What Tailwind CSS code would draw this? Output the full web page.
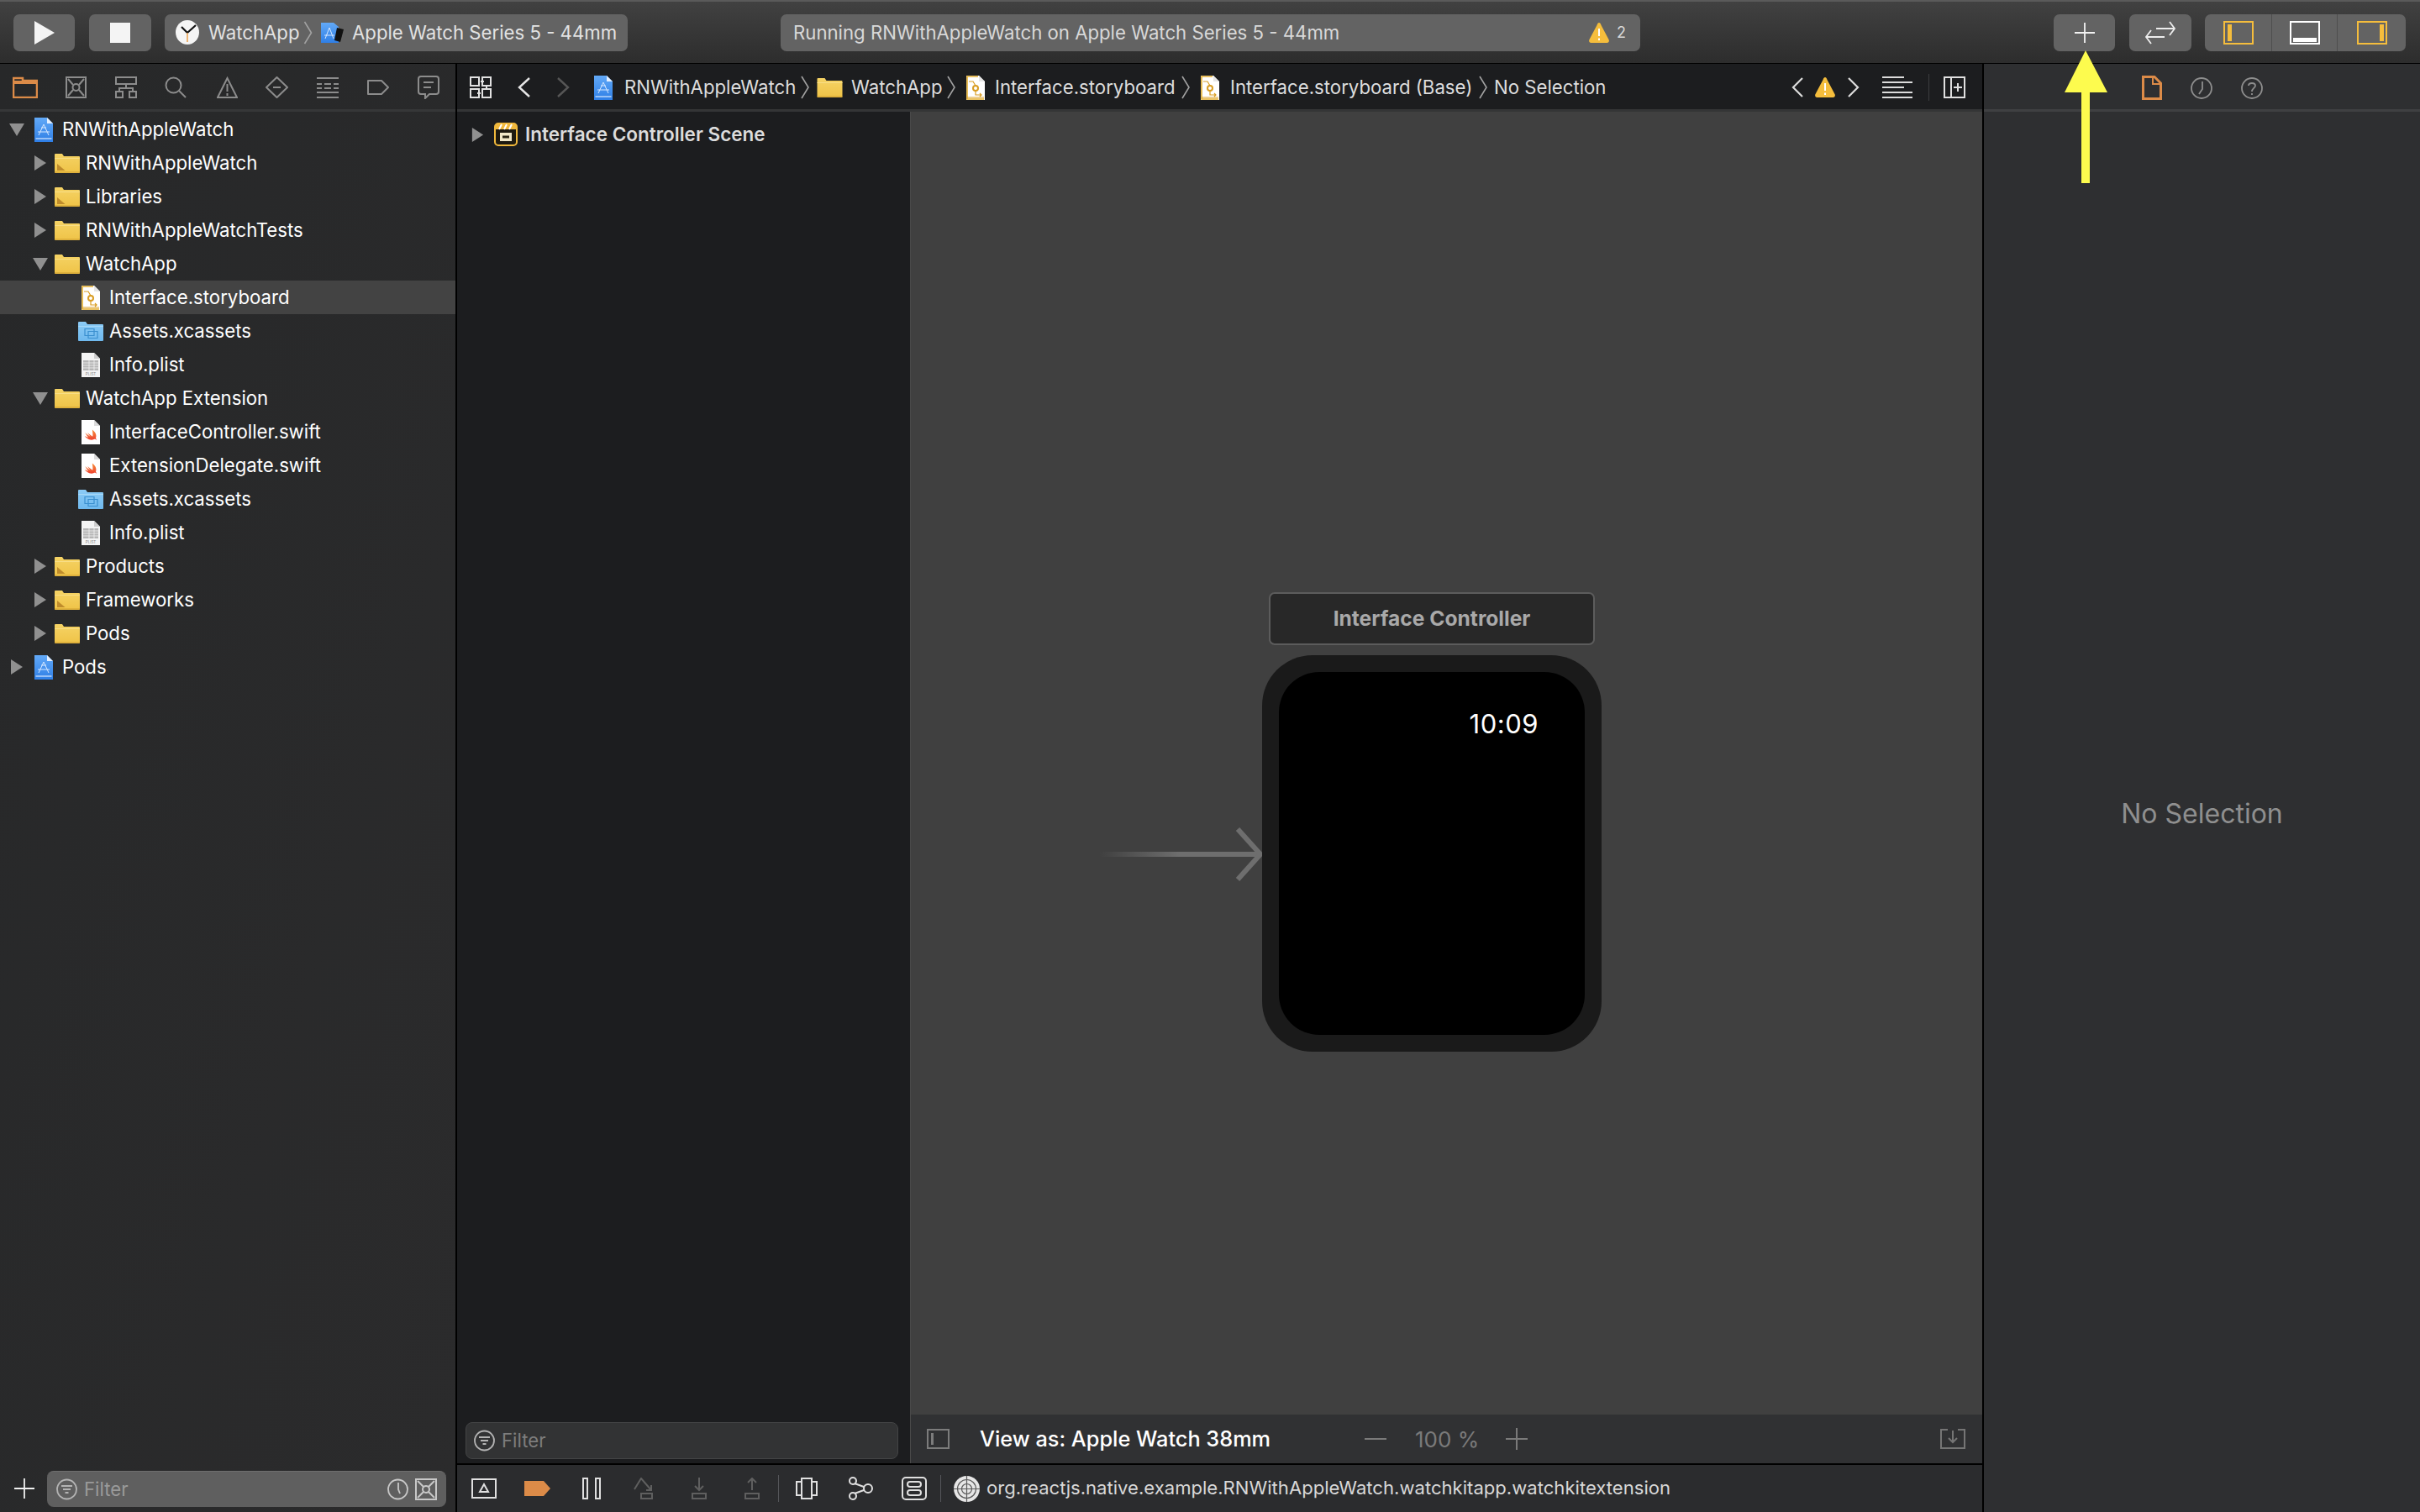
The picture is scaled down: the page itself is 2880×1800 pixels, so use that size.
<!DOCTYPE html>
<html lang="en">
<head>
  <meta charset="UTF-8">
  <title>Xcode - RNWithAppleWatch</title>
  <script src="https://cdn.jsdelivr.net/npm/@tailwindcss/browser@4"></script>
</head>
<body class="relative w-[2880px] h-[1800px] overflow-hidden flex flex-col bg-[#292a2b] font-['Inter',sans-serif] text-[22.2px] text-white">

  <!-- shared icons -->
  <svg class="absolute w-0 h-0">
    <defs>
      <linearGradient id="gBlue" x1="0" y1="0" x2="0" y2="1"><stop offset="0" stop-color="#62a9f7"/><stop offset="1" stop-color="#2f7fe6"/></linearGradient>
      <linearGradient id="gYel" x1="0" y1="0" x2="0" y2="1"><stop offset="0" stop-color="#f5d365"/><stop offset="1" stop-color="#efc347"/></linearGradient>
      <linearGradient id="gSky" x1="0" y1="0" x2="0" y2="1"><stop offset="0" stop-color="#8ccbf6"/><stop offset="1" stop-color="#6fb9ee"/></linearGradient>
      <linearGradient id="gSwift" x1="0" y1="0" x2="0" y2="1"><stop offset="0" stop-color="#f7913c"/><stop offset="1" stop-color="#ee3f2e"/></linearGradient>
      <linearGradient id="gTail" x1="0" y1="0" x2="1" y2="0"><stop offset="0" stop-color="#6e6e6e" stop-opacity="0"/><stop offset="0.5" stop-color="#6e6e6e"/><stop offset="1" stop-color="#6e6e6e"/></linearGradient>
    </defs>
    <symbol id="proj" viewBox="0 0 22 29">
      <path d="M0 0H15L22 7V29H0Z" fill="url(#gBlue)"/><path d="M15 0L22 7H15Z" fill="#e4efff"/>
      <path d="M11 8L5 21M11 8L17 21M4 17H18M8 12H14" stroke="#d5e7ff" stroke-width="1" fill="none"/>
      <path d="M1.5 25H20.5" stroke="#dcebff" stroke-width="1.2"/>
    </symbol>
    <symbol id="folder" viewBox="0 0 30 24">
      <path d="M0 2a1 1 0 0 1 1-1h8l2 3h18a1 1 0 0 1 1 1v18a1 1 0 0 1-1 1H1a1 1 0 0 1-1-1z" fill="url(#gYel)"/>
      <path d="M0 6.5H30" stroke="#f8de86" stroke-width="1"/>
      <path d="M0 23H30" stroke="#cf9f30" stroke-width="1"/>
    </symbol>
    <symbol id="group" viewBox="0 0 30 24">
      <use href="#folder"/>
      <path d="M3 21V13L12.5 21Z" fill="#bf8c2c"/>
    </symbol>
    <symbol id="assets" viewBox="0 0 30 24">
      <path d="M0 2a1 1 0 0 1 1-1h8l2 3h18a1 1 0 0 1 1 1v18a1 1 0 0 1-1 1H1a1 1 0 0 1-1-1z" fill="url(#gSky)"/>
      <path d="M0 6.5H30" stroke="#a6d8f8" stroke-width="1"/>
      <path d="M8 10.500h11v8H8zM12 13.500h11v8H12z" transform="translate(0 -1)" stroke="#3a8fcf" stroke-width="1.2" fill="none"/>
    </symbol>
    <symbol id="story" viewBox="0 0 22 29">
      <path d="M0 0H15L22 7V29H0Z" fill="#fff"/>
      <path d="M15 0L22 7H15Z" fill="#e6e6e6"/>
      <path d="M14 1H1V28H21" stroke="#e2ad2e" stroke-width="1.600" fill="none"/>
      <circle cx="11" cy="15" r="3" fill="none" stroke="#d99d22" stroke-width="2"/>
      <path d="M3 7H8L11 12M11 18V23H18M16 21L18 23L16 25M1 26H21" stroke="#d99d22" stroke-width="1.200" fill="none"/>
    </symbol>
    <symbol id="swift" viewBox="0 0 22 29">
      <path d="M0 0H15L22 7V29H0Z" fill="#fff"/><path d="M15 0L22 7H15Z" fill="#dcdcdc"/>
      <path transform="translate(3 9.500) scale(.68)" d="M14.500 3c3.500 2.500 6 6 6.500 9 .5 2.500 0 4.500-.5 5.500 1 1.500 1.500 3 1.200 4-.8-1.500-3-2.300-4.500-1.600-2 .9-5 1.300-8 .3-3-1-6-3.300-8-6.200 2 1.300 4.500 2.300 6.500 2.400C5 13.500 3 10.500 2 8c3 3 6.500 5.500 9 7C9 12.500 7 10 6 8c3 2.500 6 5 9 7 .8-3-.2-8-.5-12z" fill="url(#gSwift)"/>
    </symbol>
    <symbol id="plist" viewBox="0 0 22 29">
      <path d="M0 0H15L22 7V29H0Z" fill="#f4f4f4"/><path d="M15 0L22 7H15Z" fill="#cfcfcf"/>
      <rect x="2" y="9" width="18" height="12" fill="#b5b5b5"/>
      <path d="M2 12H20M2 15H20M2 18H20M9 9V21M15 9V21" stroke="#f4f4f4" stroke-width=".8"/>
    </symbol>
    <symbol id="right" viewBox="0 0 14 18"><path d="M0 0L14 9L0 18Z" fill="#909090"/></symbol>
    <symbol id="down" viewBox="0 0 18 15"><path d="M0 0H18L9 15Z" fill="#909090"/></symbol>
    <symbol id="sep" viewBox="0 0 10 28"><path d="M1 1L9 14L1 27" fill="none" stroke="#a2a2a2" stroke-width="1.600"/></symbol>
    <symbol id="warn" viewBox="0 0 24 24">
      <path d="M12 0C13 0 14 1 14.500 3L23.500 20C24.500 22 23.500 24 21.500 24H2.500C.5 24 -.5 22 .5 20L9.500 3C10 1 11 0 12 0Z" fill="#f5bd3c"/>
      <path d="M12 7V16M12 18.500V21" stroke="#fff" stroke-width="2"/>
    </symbol>
    <symbol id="filter" viewBox="0 0 25 26">
      <circle cx="12.500" cy="13" r="11.500" fill="none" stroke="#b4b4b4" stroke-width="1.800"/>
      <path d="M6 9H19M8 13H17M10.500 17H14.500" stroke="#b4b4b4" stroke-width="2"/>
    </symbol>
  </svg>

  <!-- toolbar -->
  <header class="h-[76px] shrink-0 flex items-center border-b border-black border-t-2 border-t-[#5a5a5a] bg-linear-to-b from-[#414141] to-[#2d2d2d]">
    <button class="ml-[16px] w-[73px] h-[44px] rounded-[7px] bg-[#636363] flex items-center justify-center">
      <svg class="w-[24px] h-[28px]" viewBox="0 0 24 28"><path d="M0 0L24 14L0 28Z" fill="#f4f4f4"/></svg>
    </button>
    <button class="ml-[17px] w-[74px] h-[44px] rounded-[7px] bg-[#636363] flex items-center justify-center">
      <span class="w-[24px] h-[24px] bg-[#f4f4f4]"></span>
    </button>
    <div class="ml-[16px] w-[551px] h-[44px] rounded-[7px] bg-[#636363] flex items-center whitespace-nowrap text-[#e2e2e2]">
      <svg class="ml-[13px] w-[28px] h-[29px] shrink-0" viewBox="0 0 28 29">
        <ellipse cx="14" cy="14.500" rx="14" ry="14.500" fill="#f5f5f5"/>
        <path d="M14 15L7 8M14 15L24 6" stroke="#111" stroke-width="2.200" fill="none"/>
        <path d="M14 15V26" stroke="#e8902c" stroke-width="1.300"/>
      </svg>
      <span class="ml-[11px] w-[107px]">WatchApp</span>
      <svg class="ml-[6px] w-[11px] h-[28px] shrink-0"><use href="#sep"/></svg>
      <svg class="ml-[8px] w-[30px] h-[26px] shrink-0" viewBox="0 0 30 26">
        <path d="M2 1H17L23 6V25H2Z" fill="url(#gBlue)"/>
        <path d="M12 7L7 20M12 7L17 20M6 16H18" stroke="#d5e7ff" stroke-width="1" fill="none"/>
        <path d="M21 7L29 9L25 24L18 22Z" fill="#111"/>
      </svg>
      <span class="ml-[9px]">Apple Watch Series 5 - 44mm</span>
    </div>
    <div class="ml-[182px] w-[1023px] h-[44px] rounded-[7px] bg-[#636363] flex items-center text-[#d8d8d8] whitespace-nowrap">
      <span class="ml-[15px]">Running RNWithAppleWatch on Apple Watch Series 5 - 44mm</span>
      <svg class="ml-auto w-[24px] h-[24px] shrink-0"><use href="#warn"/></svg>
      <span class="ml-[9px] mr-[17px] text-[18px]">2</span>
    </div>
    <button class="ml-[492px] w-[73px] h-[44px] rounded-[7px] bg-[#636363] flex items-center justify-center">
      <svg class="w-[24px] h-[24px]" viewBox="0 0 24 24"><path d="M12 0V24M0 12H24" stroke="#f2f2f2" stroke-width="1.800"/></svg>
    </button>
    <button class="ml-[17px] w-[74px] h-[44px] rounded-[7px] bg-[#636363] flex items-center justify-center">
      <svg class="w-[38px] h-[28px]" viewBox="0 0 38 28"><path d="M14 9H36M30 1L36 9L30 17M24 19H2M8 11L2 19L8 27" stroke="#ededed" stroke-width="1.800" fill="none"/></svg>
    </button>
    <div class="ml-[16px] w-[239px] h-[44px] rounded-[7px] bg-[#636363] flex items-stretch divide-x divide-[#4e4e4e]">
      <div class="w-[80px] flex items-center justify-center">
        <svg class="w-[36px] h-[28px]" viewBox="0 0 36 28"><rect x="1" y="1" width="34" height="26" fill="none" stroke="#f5bd3c" stroke-width="2"/><rect x="5" y="4" width="5" height="20" fill="#f5bd3c"/></svg>
      </div>
      <div class="w-[78px] flex items-center justify-center">
        <svg class="w-[36px] h-[28px]" viewBox="0 0 36 28"><rect x="1" y="1" width="34" height="26" fill="none" stroke="#fff" stroke-width="2"/><rect x="4" y="20" width="28" height="5" fill="#fff"/></svg>
      </div>
      <div class="flex-1 flex items-center justify-center">
        <svg class="w-[36px] h-[28px]" viewBox="0 0 36 28"><rect x="1" y="1" width="34" height="26" fill="none" stroke="#f5bd3c" stroke-width="2"/><rect x="27" y="4" width="5" height="20" fill="#f5bd3c"/></svg>
      </div>
    </div>
  </header>

  <div class="flex-1 flex min-h-0">

    <!-- navigator -->
    <aside class="w-[544px] shrink-0 flex flex-col border-r-2 border-black bg-linear-to-br from-[#272829] to-[#2b2b2c]">
      <div class="h-[57px] shrink-0 flex items-center pt-[2px] border-b-[3px] border-[#363738]">
        <svg class="ml-[15px] w-[30px] h-[26px]" viewBox="0 0 30 26"><path d="M1 25V2H12V5H29V25Z" fill="none" stroke="#dc8b48" stroke-width="2.500"/><path d="M1 5H29V9H1Z" fill="#dc8b48"/></svg>
        <svg class="ml-[33px] w-[25px] h-[26px]" viewBox="0 0 25 26" fill="none" stroke="#8c8c8c" stroke-width="2"><rect x="1" y="1" width="23" height="24"/><circle cx="12.500" cy="13" r="4"/><path d="M3 3L9 10M22 3L16 10M3 23L9 16M22 23L16 16"/></svg>
        <svg class="ml-[34px] w-[26px] h-[26px]" viewBox="0 0 26 26" fill="none" stroke="#8c8c8c" stroke-width="2"><rect x="1" y="1" width="24" height="8"/><rect x="1" y="18" width="8" height="7"/><rect x="17" y="18" width="8" height="7"/><path d="M13 9V14M5 18V14H21V18"/></svg>
        <svg class="ml-[33px] w-[26px] h-[26px]" viewBox="0 0 26 26" fill="none" stroke="#8c8c8c" stroke-width="2"><circle cx="10.500" cy="10.500" r="9"/><path d="M17 17L25 25"/></svg>
        <svg class="ml-[36px] w-[25px] h-[26px]" viewBox="0 0 25 26" fill="none" stroke="#8c8c8c" stroke-width="2"><path d="M12.500 2L24 25H1Z"/><path d="M12.500 9V18M12.500 20V23"/></svg>
        <svg class="ml-[33px] w-[27px] h-[26px]" viewBox="0 0 27 26" fill="none" stroke="#8c8c8c" stroke-width="2"><path d="M13.500 1L26 13L13.500 25L1 13Z" stroke-linejoin="round"/><path d="M9 13H18"/></svg>
        <svg class="ml-[34px] w-[26px] h-[26px]" viewBox="0 0 26 26" fill="none" stroke="#8c8c8c" stroke-width="2"><path d="M0 2H26M0 9H6M9 9H17M20 9H26M0 14H6M9 14H17M20 14H26M0 19H26M0 25H26"/></svg>
        <svg class="ml-[34px] w-[26px] h-[18px]" viewBox="0 0 26 18" fill="none" stroke="#8c8c8c" stroke-width="2"><path d="M1 1H17L25 9L17 17H1Z" stroke-linejoin="round"/></svg>
        <svg class="ml-[34px] w-[26px] h-[28px]" viewBox="0 0 26 28" fill="none" stroke="#8c8c8c" stroke-width="2"><path d="M4 1H22Q25 1 25 4V19Q25 22 22 22H14L9 27V22H4Q1 22 1 19V4Q1 1 4 1Z"/><path d="M7 8H19M7 14H16"/></svg>
      </div>

      <ul class="flex-1 pt-[1px] whitespace-nowrap">
        <li class="h-[40px] flex items-center pl-[11px]"><svg class="w-[18px] h-[15px]"><use href="#down"/></svg><svg class="ml-[12px] w-[22px] h-[29px]"><use href="#proj"/></svg><span class="ml-[11px]">RNWithAppleWatch</span></li>
        <li class="h-[40px] flex items-center pl-[41px]"><svg class="w-[14px] h-[18px]"><use href="#right"/></svg><svg class="ml-[10px] w-[30px] h-[24px]"><use href="#group"/></svg><span class="ml-[7px]">RNWithAppleWatch</span></li>
        <li class="h-[40px] flex items-center pl-[41px]"><svg class="w-[14px] h-[18px]"><use href="#right"/></svg><svg class="ml-[10px] w-[30px] h-[24px]"><use href="#group"/></svg><span class="ml-[7px]">Libraries</span></li>
        <li class="h-[40px] flex items-center pl-[41px]"><svg class="w-[14px] h-[18px]"><use href="#right"/></svg><svg class="ml-[10px] w-[30px] h-[24px]"><use href="#folder"/></svg><span class="ml-[7px]">RNWithAppleWatchTests</span></li>
        <li class="h-[40px] flex items-center pl-[39px]"><svg class="w-[18px] h-[15px]"><use href="#down"/></svg><svg class="ml-[8px] w-[30px] h-[24px]"><use href="#folder"/></svg><span class="ml-[7px]">WatchApp</span></li>
        <li class="h-[40px] flex items-center pl-[97px] bg-[#434343]"><svg class="w-[22px] h-[29px]"><use href="#story"/></svg><span class="ml-[11px]">Interface.storyboard</span></li>
        <li class="h-[40px] flex items-center pl-[93px]"><svg class="w-[30px] h-[24px]"><use href="#assets"/></svg><span class="ml-[7px]">Assets.xcassets</span></li>
        <li class="h-[40px] flex items-center pl-[97px]"><svg class="w-[22px] h-[29px]" viewBox="0 0 22 29"><use href="#plist" width="22" height="29"/><text x="11" y="27" text-anchor="middle" font-size="4.500" fill="#8a8a8a">PLIST</text></svg><span class="ml-[11px]">Info.plist</span></li>
        <li class="h-[40px] flex items-center pl-[39px]"><svg class="w-[18px] h-[15px]"><use href="#down"/></svg><svg class="ml-[8px] w-[30px] h-[24px]"><use href="#folder"/></svg><span class="ml-[7px]">WatchApp Extension</span></li>
        <li class="h-[40px] flex items-center pl-[97px]"><svg class="w-[22px] h-[29px]"><use href="#swift"/></svg><span class="ml-[11px]">InterfaceController.swift</span></li>
        <li class="h-[40px] flex items-center pl-[97px]"><svg class="w-[22px] h-[29px]"><use href="#swift"/></svg><span class="ml-[11px]">ExtensionDelegate.swift</span></li>
        <li class="h-[40px] flex items-center pl-[93px]"><svg class="w-[30px] h-[24px]"><use href="#assets"/></svg><span class="ml-[7px]">Assets.xcassets</span></li>
        <li class="h-[40px] flex items-center pl-[97px]"><svg class="w-[22px] h-[29px]" viewBox="0 0 22 29"><use href="#plist" width="22" height="29"/><text x="11" y="27" text-anchor="middle" font-size="4.500" fill="#8a8a8a">PLIST</text></svg><span class="ml-[11px]">Info.plist</span></li>
        <li class="h-[40px] flex items-center pl-[41px]"><svg class="w-[14px] h-[18px]"><use href="#right"/></svg><svg class="ml-[10px] w-[30px] h-[24px]"><use href="#group"/></svg><span class="ml-[7px]">Products</span></li>
        <li class="h-[40px] flex items-center pl-[41px]"><svg class="w-[14px] h-[18px]"><use href="#right"/></svg><svg class="ml-[10px] w-[30px] h-[24px]"><use href="#group"/></svg><span class="ml-[7px]">Frameworks</span></li>
        <li class="h-[40px] flex items-center pl-[41px]"><svg class="w-[14px] h-[18px]"><use href="#right"/></svg><svg class="ml-[10px] w-[30px] h-[24px]"><use href="#folder"/></svg><span class="ml-[7px]">Pods</span></li>
        <li class="h-[40px] flex items-center pl-[13px]"><svg class="w-[14px] h-[18px]"><use href="#right"/></svg><svg class="ml-[14px] w-[22px] h-[29px]"><use href="#proj"/></svg><span class="ml-[11px]">Pods</span></li>
      </ul>

      <div class="h-[56px] shrink-0 flex items-center">
        <svg class="ml-[17px] w-[24px] h-[24px] shrink-0" viewBox="0 0 24 24"><path d="M12 0V24M0 12H24" stroke="#f0f0f0" stroke-width="1.800"/></svg>
        <div class="ml-[15px] w-[475px] h-[43px] rounded-[8px] bg-[#5f5f5f] border-t border-[#6e6e6e] flex items-center">
          <svg class="ml-[11px] w-[25px] h-[26px]"><use href="#filter"/></svg>
          <span class="ml-[8px] text-[#9a9a9a]">Filter</span>
          <svg class="ml-auto w-[25px] h-[26px]" viewBox="0 0 25 26" fill="none" stroke="#c8c8c8" stroke-width="1.800"><circle cx="12.500" cy="13" r="11.500"/><path d="M13 5V13L15 18"/></svg>
          <svg class="ml-[8px] mr-[11px] w-[26px] h-[26px]" viewBox="0 0 26 26" fill="none" stroke="#c8c8c8" stroke-width="2"><rect x="1" y="1" width="24" height="24"/><circle cx="13" cy="13" r="4"/><path d="M3 3L10 10M23 3L16 10M3 23L10 16M23 23L16 16"/></svg>
        </div>
      </div>
    </aside>

    <!-- editor -->
    <main class="flex-1 min-w-0 flex flex-col">
      <div class="h-[57px] shrink-0 flex items-center pt-[2px] border-b-[3px] border-[#343536] bg-[#1c1d1f] text-[#dedede] whitespace-nowrap">
        <svg class="ml-[15px] w-[26px] h-[26px] shrink-0" viewBox="0 0 26 26" fill="none" stroke="#e2e2e2" stroke-width="2"><path d="M1 1H11V11H1ZM15 1H25V11H15ZM1 15H11V25H1ZM15 15H25V25H15Z"/><path d="M13 6H17M13 20H9M20 11V15"/></svg>
        <svg class="ml-[31px] w-[15px] h-[24px] shrink-0" viewBox="0 0 15 24"><path d="M14 1L2 12L14 23" fill="none" stroke="#e6e6e6" stroke-width="2.400"/></svg>
        <svg class="ml-[32px] w-[15px] h-[24px] shrink-0" viewBox="0 0 15 24"><path d="M1 1L13 12L1 23" fill="none" stroke="#565656" stroke-width="2.400"/></svg>
        <svg class="ml-[29px] w-[22px] h-[29px] shrink-0"><use href="#proj"/></svg>
        <span class="ml-[14px] w-[204px]">RNWithAppleWatch</span>
        <svg class="ml-[6px] w-[10px] h-[28px] shrink-0"><use href="#sep"/></svg>
        <svg class="ml-[9px] w-[31px] h-[24px] shrink-0"><use href="#folder"/></svg>
        <span class="ml-[10px] w-[106px]">WatchApp</span>
        <svg class="ml-[8px] w-[10px] h-[28px] shrink-0"><use href="#sep"/></svg>
        <svg class="ml-[13px] w-[22px] h-[29px] shrink-0"><use href="#story"/></svg>
        <span class="ml-[12px] w-[214px]">Interface.storyboard</span>
        <svg class="ml-[8px] w-[10px] h-[28px] shrink-0"><use href="#sep"/></svg>
        <svg class="ml-[13px] w-[22px] h-[29px] shrink-0"><use href="#story"/></svg>
        <span class="ml-[13px] w-[288px]">Interface.storyboard (Base)</span>
        <svg class="ml-[8px] w-[10px] h-[28px] shrink-0"><use href="#sep"/></svg>
        <span class="ml-[8px]">No Selection</span>
        <svg class="ml-auto w-[14px] h-[24px] shrink-0" viewBox="0 0 14 24"><path d="M13 1L2 12L13 23" fill="none" stroke="#dcdcdc" stroke-width="2.200"/></svg>
        <svg class="ml-[14px] w-[24px] h-[24px] shrink-0"><use href="#warn"/></svg>
        <svg class="ml-[15px] w-[14px] h-[24px] shrink-0" viewBox="0 0 14 24"><path d="M1 1L12 12L1 23" fill="none" stroke="#dcdcdc" stroke-width="2.200"/></svg>
        <svg class="ml-[27px] w-[36px] h-[26px] shrink-0" viewBox="0 0 36 26"><path d="M0 1H26M0 7H36M0 13H26M0 19H36M0 25H36" stroke="#dcdcdc" stroke-width="2"/></svg>
        <span class="ml-[19px] w-px h-[32px] bg-[#3c3d3f] shrink-0"></span>
        <svg class="ml-[17px] mr-[20px] w-[26px] h-[26px] shrink-0" viewBox="0 0 26 26" fill="none" stroke="#e0e0e0" stroke-width="2"><rect x="1" y="1" width="24" height="24"/><path d="M9 1V25M17 8V18M12 13H22"/></svg>
      </div>

      <div class="flex-1 min-h-0 flex">
        <!-- outline -->
        <div class="w-[540px] shrink-0 flex flex-col bg-[#1c1d1f] border-r border-[#4a4a4a]">
          <div class="h-[40px] mt-[7px] flex items-center pl-[17px]">
            <svg class="w-[15px] h-[17px]"><use href="#right"/></svg>
            <svg class="ml-[12px] w-[28px] h-[28px]" viewBox="0 0 28 28">
              <rect x="1" y="1" width="26" height="26" rx="4" fill="#1e1a10" stroke="#f0b83c" stroke-width="2"/>
              <path d="M2 2H26V8H2Z" fill="#f0b83c"/>
              <path d="M6 8L9 2M12 8L15 2M18 8L21 2" stroke="#fff" stroke-width="2"/>
              <rect x="7" y="12" width="14" height="10" fill="#f2e8c8"/><rect x="10" y="15.500" width="8" height="3" fill="#2b2615"/>
            </svg>
            <span class="ml-[9px] font-semibold text-[22.5px] text-[#dcdcdc]">Interface Controller Scene</span>
          </div>
          <div class="mt-auto mb-[5px] ml-[10px] w-[515px] h-[44px] rounded-[8px] bg-[#323334] border border-[#434445] flex items-center">
            <svg class="ml-[9px] w-[25px] h-[26px]"><use href="#filter"/></svg>
            <span class="ml-[8px] text-[#7d7d7d]">Filter</span>
          </div>
        </div>

        <!-- canvas -->
        <div class="flex-1 min-w-0 flex flex-col">
          <div class="relative flex-1 bg-[#404040]">
            <svg class="absolute left-[225px] top-[851px] w-[193px] h-[66px]" viewBox="0 0 193 66">
              <rect x="0" y="30" width="191" height="6" fill="url(#gTail)"/>
              <path d="M164 3L191 33L164 63" fill="none" stroke="#6e6e6e" stroke-width="6"/>
            </svg>
            <div class="absolute left-[426px] top-[572px] w-[388px] h-[63px] rounded-[7px] bg-[#282828] border-2 border-[#5c5c5c] flex items-center justify-center font-bold text-[#a9a9a9] text-[24.6px]">Interface Controller</div>
            <div class="absolute left-[418px] top-[647px] w-[404px] h-[472px] rounded-[60px] bg-[#1a1a1a] p-[20px]">
              <div class="h-full rounded-[48px] bg-black flex justify-end items-start pt-[44px] pr-[55px] text-[31px] leading-[36px] tracking-[0.5px]">10:09</div>
            </div>
          </div>
          <div class="h-[58px] shrink-0 flex items-center bg-[#303133] whitespace-nowrap">
            <svg class="ml-[19px] w-[27px] h-[24px]" viewBox="0 0 27 24" fill="none" stroke="#7c7c7c" stroke-width="2"><rect x="1" y="1" width="25" height="22"/><rect x="5" y="5" width="3" height="14" fill="#7c7c7c" stroke="none"/></svg>
            <span class="ml-[36px] w-[346px] text-[25.3px] font-medium text-white">View as: Apple Watch 38mm</span>
            <svg class="ml-[112px] w-[26px] h-[2px]" viewBox="0 0 26 2"><path d="M0 1H26" stroke="#7a7a7a" stroke-width="2"/></svg>
            <span class="ml-[34px] w-[74px] text-[26px] text-[#7a7a7a]">100 %</span>
            <svg class="ml-[34px] w-[26px] h-[26px]" viewBox="0 0 26 26"><path d="M13 0V26M0 13H26" stroke="#7a7a7a" stroke-width="2"/></svg>
            <svg class="ml-auto mr-[20px] w-[30px] h-[24px]" viewBox="0 0 30 24" fill="none" stroke="#757575" stroke-width="2"><path d="M9 1H1V23H29V1H21M15 2V15M10 11L15 16L20 11"/></svg>
          </div>
        </div>
      </div>

      <!-- debug bar -->
      <div class="h-[58px] shrink-0 flex items-center bg-[#2b2c2e] border-t-2 border-black whitespace-nowrap text-[#d8d8d8]">
        <svg class="ml-[17px] w-[30px] h-[24px] shrink-0" viewBox="0 0 30 24" fill="none" stroke="#e0e0e0" stroke-width="2"><rect x="1" y="1" width="28" height="22"/><path d="M15 7L10 16H20Z"/></svg>
        <svg class="ml-[33px] w-[31px] h-[18px] shrink-0" viewBox="0 0 31 18"><path d="M0 0H23L31 9L23 18H0Z" fill="#dc8b48"/></svg>
        <svg class="ml-[38px] w-[22px] h-[26px] shrink-0" viewBox="0 0 22 26" fill="none" stroke="#e0e0e0" stroke-width="2"><rect x="1" y="1" width="5" height="24"/><rect x="16" y="1" width="5" height="24"/></svg>
        <svg class="ml-[39px] w-[27px] h-[26px] shrink-0" viewBox="0 0 27 26" fill="none" stroke="#5f5f5f" stroke-width="2"><path d="M1 14L9 1L21 15M21 9V15H15M9 19H22V25H9Z"/></svg>
        <svg class="ml-[41px] w-[20px] h-[26px] shrink-0" viewBox="0 0 20 26" fill="none" stroke="#5f5f5f" stroke-width="2"><path d="M10 0V15M5 10L10 15L15 10M2 19H18V25H2Z"/></svg>
        <svg class="ml-[43px] w-[20px] h-[26px] shrink-0" viewBox="0 0 20 26" fill="none" stroke="#5f5f5f" stroke-width="2"><path d="M10 15V1M5 6L10 1L15 6M2 19H18V25H2Z"/></svg>
        <span class="ml-[21px] w-px h-[32px] bg-[#55565a] shrink-0"></span>
        <svg class="ml-[20px] w-[26px] h-[26px] shrink-0" viewBox="0 0 26 26" fill="none" stroke="#e0e0e0" stroke-width="2"><rect x="7" y="1" width="12" height="24"/><rect x="1" y="5" width="6" height="16"/><rect x="19" y="5" width="6" height="16"/></svg>
        <svg class="ml-[36px] w-[31px] h-[28px] shrink-0" viewBox="0 0 31 28" fill="none" stroke="#e0e0e0" stroke-width="2"><circle cx="6" cy="5" r="4"/><circle cx="24" cy="14" r="5"/><circle cx="6" cy="23" r="4"/><path d="M8 8L19 12M8 20L19 16"/></svg>
        <svg class="ml-[33px] w-[30px] h-[28px] shrink-0" viewBox="0 0 30 28" fill="none" stroke="#e0e0e0" stroke-width="2"><rect x="1" y="1" width="28" height="26" rx="4"/><rect x="7" y="6" width="16" height="6" rx="3"/><rect x="7" y="16" width="16" height="6" rx="3"/></svg>
        <span class="ml-[16px] w-px h-[32px] bg-[#55565a] shrink-0"></span>
        <svg class="ml-[15px] w-[31px] h-[31px] shrink-0" viewBox="0 0 31 31" fill="none" stroke="#5a5a5a" stroke-width="1.200"><circle cx="15.500" cy="15.500" r="15.500" fill="#e6e6e6" stroke="none"/><circle cx="15.500" cy="15.500" r="11"/><circle cx="15.500" cy="15.500" r="6"/><path d="M15.500 0V31M0 15.500H31"/></svg>
        <span class="ml-[8px] text-[22.1px]">org.reactjs.native.example.RNWithAppleWatch.watchkitapp.watchkitextension</span>
      </div>
    </main>

    <!-- inspector -->
    <aside class="w-[521px] shrink-0 flex flex-col border-l-2 border-black bg-[#2e2f31]">
      <div class="h-[57px] shrink-0 flex items-center pt-[3px] border-b-[3px] border-[#3f4042]">
        <svg class="ml-[188px] w-[24px] h-[29px] shrink-0" viewBox="0 0 24 29"><path d="M1.500 1.500H15L22.500 9V27.500H1.500Z" fill="none" stroke="#dc8b48" stroke-width="3"/><path d="M13 3V10H22" fill="none" stroke="#dc8b48" stroke-width="2"/></svg>
        <svg class="ml-[34px] w-[26px] h-[26px] shrink-0" viewBox="0 0 26 26" fill="none" stroke="#8e8e8e" stroke-width="1.800"><circle cx="13" cy="13" r="12"/><path d="M14 5V14L10 20"/></svg>
        <svg class="ml-[34px] w-[26px] h-[26px] shrink-0" viewBox="0 0 26 26" fill="none" stroke="#8e8e8e" stroke-width="1.800"><circle cx="13" cy="13" r="12"/><path d="M9 10C9 6 17 6 17 10C17 13 13 13 13 17M13 19V21"/></svg>
      </div>
      <div class="flex-1 flex items-center justify-center pt-[4px] text-[32px] text-[#8f8f8f]">No Selection</div>
    </aside>
  </div>

  <!-- annotation arrow over the toolbar -->
  <svg class="absolute left-[2457px] top-[60px] w-[51px] h-[158px]" viewBox="0 0 51 158">
    <path d="M25 0L51 50H30V158H20V50H0Z" fill="#fdfb4e"/>
  </svg>
</body>
</html>
